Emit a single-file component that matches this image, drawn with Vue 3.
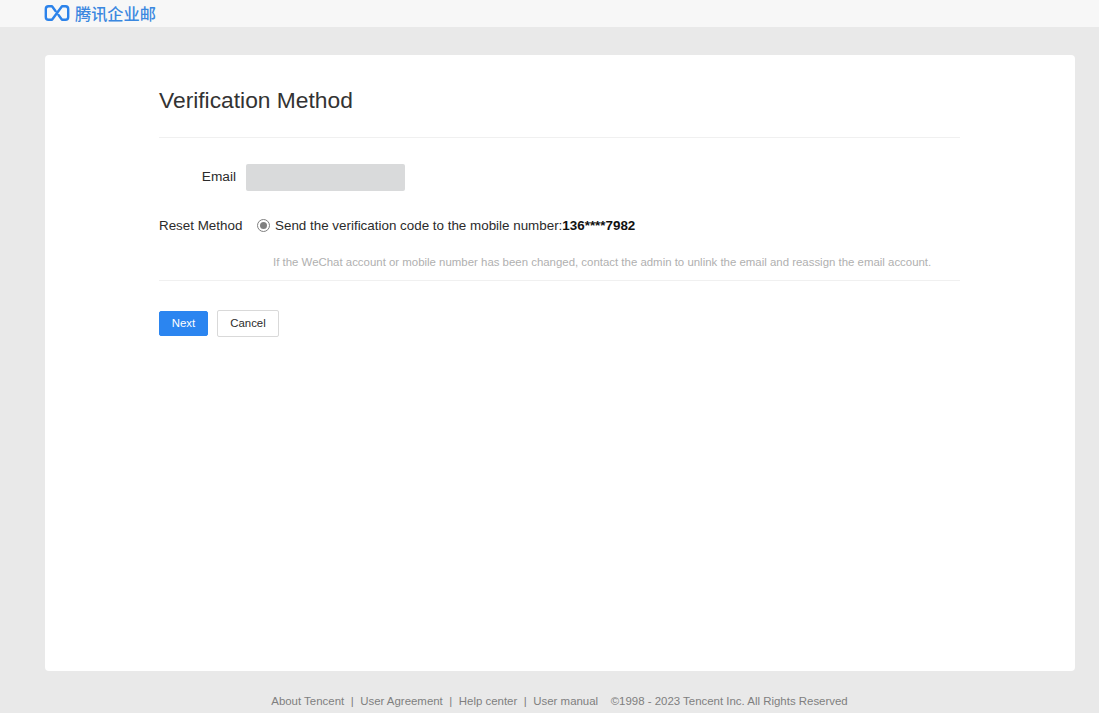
<script setup>
const links = ['About Tencent', 'User Agreement', 'Help center', 'User manual']
</script>

<template>
  <div class="page">
    <header class="top">
      <svg class="logo" width="26" height="18" viewBox="0 0 26 18" fill="none" stroke="#2b82ea" stroke-width="2.4" stroke-linejoin="round" stroke-linecap="round">
        <path d="M11.5 7L8 2.2H4.5Q1.8 2.2 1.8 5V13Q1.8 15.8 4.5 15.8H8L18 2.2H21.5Q24.2 2.2 24.2 5V13Q24.2 15.8 21.5 15.8H18L14.5 11" />
      </svg>
      <span class="brand">腾讯企业邮</span>
    </header>
    <main class="card">
      <div class="inner">
        <h1>Verification Method</h1>
        <div class="form">
          <div class="row email-row">
            <label class="email-label">Email</label>
            <div class="masked"></div>
          </div>
          <div class="row method-row">
            <label>Reset Method</label>
            <span class="radio"><i></i></span>
            <span class="method-text">Send the verification code to the mobile number:<b>136****7982</b></span>
          </div>
          <p class="hint">If the WeChat account or mobile number has been changed, contact the admin to unlink the email and reassign the email account.</p>
        </div>
        <div class="actions">
          <button class="btn primary">Next</button>
          <button class="btn">Cancel</button>
        </div>
      </div>
    </main>
    <footer class="foot">
      <template v-for="(l, i) in links" :key="l">
        <span>{{ l }}</span><span v-if="i < links.length - 1" class="sep">|</span>
      </template>
      <span class="copy">©1998 - 2023 Tencent Inc. All Rights Reserved</span>
    </footer>
  </div>
</template>

<style>
html, body { margin: 0; background: #e9e9e9; }
</style>

<style scoped>
.page {
  height: 713px;
  display: flex;
  flex-direction: column;
  background: #e9e9e9;
  font-family: "Liberation Sans", Arial, sans-serif;
  color: #2b2b2b;
  overflow: hidden;
}
.top {
  height: 27px;
  box-sizing: border-box;
  flex: none;
  background: #f7f7f7;
  display: flex;
  align-items: center;
  padding-left: 44px;
}
.logo { display: block; margin-right: 5px; margin-top: -1px; }
.brand {
  font-family: "Noto Sans CJK SC", sans-serif;
  font-size: 16.2px;
  font-weight: 500;
  line-height: 27px;
  color: #3b88e0;
}
.card {
  flex: none;
  margin: 28px 24px 0 45px;
  height: 616px;
  background: #fff;
  border-radius: 4px;
}
.inner { width: 801px; margin-left: 114px; }
h1 {
  margin: 0;
  height: 83px;
  box-sizing: border-box;
  padding-top: 30px;
  font-size: 22.8px;
  line-height: 30px;
  font-weight: 400;
  color: #333;
  border-bottom: 1px solid #f0f0f0;
}
.form { border-bottom: 1px solid #f0f0f0; height: 143px; box-sizing: border-box; padding-top: 26px; }
.row { display: flex; align-items: center; font-size: 13.4px; }
.email-row { height: 27px; }
.email-label { width: 77px; text-align: right; margin-right: 10px; padding-bottom: 3px; font-size: 13.7px; }
.masked { width: 159px; height: 27px; background: #d9dadb; border-radius: 2px; }
.method-row { margin-top: 21px; height: 27px; }
.method-row label { width: 98px; padding-bottom: 1px; }
.radio {
  width: 13px; height: 13px; box-sizing: border-box;
  border: 1px solid #808080; border-radius: 50%;
  display: flex; align-items: center; justify-content: center;
  margin-right: 5px;
}
.radio i { width: 7px; height: 7px; border-radius: 50%; background: #808080; display: block; }
.method-text b { color: #111; }
.hint { margin: 16px 0 0 114px; font-size: 11.43px; line-height: 14px; color: #b0b0b0; white-space: nowrap; }
.actions { display: flex; gap: 9px; margin-top: 29px; align-items: center; }
.btn {
  height: 27px; width: 62px; padding: 0 0 2px; box-sizing: border-box;
  border: 1px solid #d9d9d9; border-radius: 2px; background: #fff;
  font: 11.4px "Liberation Sans", Arial, sans-serif; color: #2b2b2b;
}
.btn.primary { height: 25px; width: 49px; background: #2b85f0; border-color: #2b85f0; color: #fff; }
.foot {
  flex: 1;
  display: flex;
  align-items: center;
  justify-content: center;
  font-size: 11.45px;
  color: #7f7f7f;
  padding-left: 20px;
  padding-top: 18px;
  box-sizing: border-box;
}
.sep { margin: 0 6.5px; }
.copy { margin-left: 12.5px; }
</style>
